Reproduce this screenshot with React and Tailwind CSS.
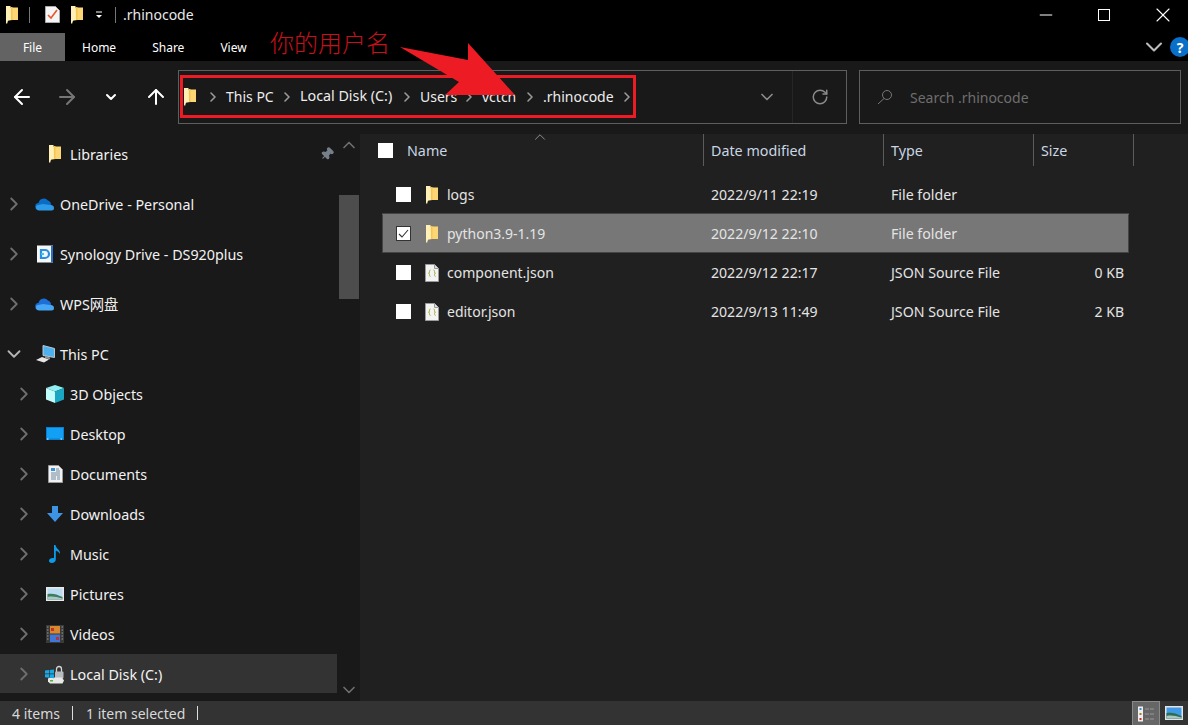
import { ChevronRight, ChevronDown, ChevronUp, ArrowLeft, ArrowRight, ArrowUp, RotateCw, X, Minus, Pin } from 'lucide-react';

const Folder = () => (
  <svg viewBox="0 0 12 18" className="w-3 h-[18px] shrink-0">
    <path d="M4 1.500h8V14H4z" fill="#fcd675" />
    <path d="M0 0h4.500L5 14l-3 .8L1 18l-1-1z" fill="#fff0b8" />
    <path d="M2 14.800L5 14V1h1.500v13z" fill="#f5c451" />
  </svg>
);

const JsonFile = () => (
  <svg viewBox="0 0 14 18" className="w-[14px] h-[18px]">
    <path d="M.5.5h9l4 4v13H.5z" fill="#f3f3f3" stroke="#9a9a9a" />
    <path d="M9.5.5v4h4" fill="#ddd" stroke="#9a9a9a" />
    <path d="M5.500 6c-1.200 0-1 1-1 2s-.3 1-1 1.200c.7.200 1 .200 1 1.200s-.2 2 1 2M8.500 6c1.200 0 1 1 1 2s.3 1 1 1.200c-.7.200-1 .200-1 1.200s.2 2 1 2" fill="none" stroke="#a8ad3c" strokeWidth="1" />
  </svg>
);

const Cloud = ({ top, bottom }) => (
  <svg viewBox="0 0 20 14" className="w-5 h-[14px]">
    <path d="M4 13a3.500 3.500 0 0 1-.5-7A5.500 5.500 0 0 1 13 3.500 4.500 4.500 0 0 1 16 8a2.700 2.700 0 0 1 .5 5z" fill={top} />
    <path d="M4 13.500a3 3 0 0 1-2-5.300L8 7l9 1.200a2.700 2.700 0 0 1 2 2.800 2.500 2.500 0 0 1-2.500 2.500z" fill={bottom} />
  </svg>
);

const SynologyIcon = () => (
  <svg viewBox="0 0 18 18" className="w-[18px] h-[18px]">
    <rect x="1" y="0.500" width="16" height="17" fill="#f4f8fb" />
    <rect x="15" y="0.500" width="2" height="17" fill="#2b6fc4" />
    <path d="M5 5h4a4 4 0 0 1 0 8H5z" fill="none" stroke="#2a8fe0" strokeWidth="2.200" />
    <path d="M5 9h3" stroke="#37c6e8" strokeWidth="2" />
  </svg>
);

const PcIcon = () => (
  <svg viewBox="0 0 20 18" className="w-5 h-[18px]">
    <path d="M8 .5l11.500 3v9L8 10.500z" fill="#4fb0ee" stroke="#c9d2d8" strokeWidth="0.900" />
    <path d="M10 11l5 1.500v2l-5-1.500z" fill="#8b959b" />
    <path d="M1 15l6-3 7 2.500-5 3z" fill="#e6e6e6" />
  </svg>
);

const CubeIcon = () => (
  <svg viewBox="0 0 18 18" className="w-[18px] h-[18px]">
    <path d="M9 0l9 3-9 3.500L0 3z" fill="#8ff0f2" />
    <path d="M0 3l9 3.500V18L0 14.500z" fill="#c4fbfb" />
    <path d="M18 3L9 6.500V18l9-3.500z" fill="#1ba7c4" />
  </svg>
);

const DesktopIcon = () => (
  <svg viewBox="0 0 18 14" className="w-[18px] h-[14px]">
    <rect width="18" height="13" fill="#0b7fd0" />
    <rect x="1" y="1" width="16" height="10.500" fill="#12a0f5" />
    <path d="M1 12h1.500M14.500 12H16" stroke="#fff" strokeWidth="1" />
  </svg>
);

const DocsIcon = () => (
  <svg viewBox="0 0 15 18" className="w-[15px] h-[18px]">
    <path d="M.5.5h10l4 4v13H.5z" fill="#f1f1f1" stroke="#9a9a9a" />
    <path d="M3 3h4v3H3z" fill="#3a93d8" />
    <path d="M3 8h9M3 10h9M3 12h5M3 14h5M9 12h3M9 14h3M8 4h3M8 6h4" stroke="#6c8ba0" strokeWidth="1" />
  </svg>
);

const DownloadIcon = () => (
  <svg viewBox="0 0 16 16" className="w-4 h-4">
    <path d="M5 0h6v7h5l-8 9-8-9h5z" fill="#3d93e4" />
  </svg>
);

const MusicIcon = () => (
  <svg viewBox="0 0 12 18" className="w-3 h-[18px]">
    <path d="M5 0h1.500c.5 4 5 4.500 4.500 9-1-2-3-3-4.200-3.300V14.500c0 2-2 3.500-4 3.500S0 16.800 0 15.500 2 12.500 5 13z" fill="#0d9be8" />
  </svg>
);

const PicturesIcon = () => (
  <svg viewBox="0 0 18 14" className="w-[18px] h-[14px]">
    <rect width="18" height="14" fill="#e9e9e9" />
    <rect x="1.500" y="1.500" width="15" height="11" fill="#b9dcf3" />
    <path d="M1.500 7c5-1 9 0 15 3v2.500h-15z" fill="#3f7a63" />
    <path d="M1.500 10c5-1 9 0 15 1.500v1h-15z" fill="#a9c8c2" />
  </svg>
);

const VideosIcon = () => (
  <svg viewBox="0 0 18 18" className="w-[18px] h-[18px]">
    <rect width="18" height="18" fill="#3a3a3a" />
    <rect x="4" y="1" width="10" height="7.500" fill="#d8892f" />
    <rect x="4" y="9.500" width="10" height="7.500" fill="#3f77d6" />
    <path d="M5 3h3v3H5zM10 12h3v3h-3z" fill="#c62f2a" />
    <path d="M1 2h1.500M1 5h1.500M1 8h1.500M1 11h1.500M1 14h1.500M15.500 2H17M15.500 5H17M15.500 8H17M15.500 11H17M15.500 14H17" stroke="#999" strokeWidth="1" />
  </svg>
);

const DiskIcon = () => (
  <svg viewBox="0 0 20 19" className="w-5 h-[19px]">
    <path d="M11.500 7V4a2.500 2.500 0 0 1 5 0v3" fill="none" stroke="#d5d5d5" strokeWidth="1.300" />
    <rect x="10" y="6.500" width="8.500" height="7" rx="1" fill="#b7bcc0" />
    <path d="M3 13.500l2-1h12l2 3-1.500 3H5l-2-2z" fill="#e8e8e8" />
    <rect x="5" y="15" width="3" height="1.500" fill="#55b04a" />
    <path d="M0 5.500l4-.5v3.500H0zM4.700 5L9 4.400v4.100H4.700zM0 9.200h4v3.500l-4-.5zM4.700 9.200H9v4l-4.300-.5z" fill="#16a9e8" />
  </svg>
);

const Check = ({ checked }) => (
  <span className={`flex items-center justify-center w-[15px] h-[15px] bg-white ${checked ? 'border border-[#333]' : ''}`}>
    {checked && (
      <svg viewBox="0 0 13 13" className="w-[13px] h-[13px]">
        <path d="M2 7l3 3 6-7" fill="none" stroke="#333" strokeWidth="1.100" />
      </svg>
    )}
  </span>
);

const Sep = () => <ChevronRight className="w-4 h-4 ml-[6px] mr-[5px] text-[#9a9a9a] shrink-0" strokeWidth={2.400} />;

const NavRow = ({ label, icon, indent, open, active, gapTop, arrow = true, pin }) => (
  <div className={`flex items-center h-10 shrink-0 ${gapTop ? 'mt-[10px]' : ''} ${active ? 'bg-[#333333]' : ''}`}>
    <div className={`flex items-center justify-center w-[14px] shrink-0 ${indent ? 'ml-[17px]' : 'ml-[7px]'}`}>
      {arrow && (open
        ? <ChevronDown className="w-[22px] h-[22px] shrink-0 text-[#b5b5b5]" strokeWidth={2} />
        : <ChevronRight className="w-[22px] h-[22px] shrink-0 text-[#6f6f6f]" strokeWidth={2} />)}
    </div>
    <div className="flex items-center justify-center shrink-0 w-5 ml-[14px]">{icon}</div>
    <span className="ml-[5px] pt-[2px] text-[14.3px] text-[#f2f2f2]">{label}</span>
    {pin && <Pin className="ml-auto mr-[3px] w-[14px] h-[14px] text-[#77808a] fill-[#77808a] rotate-45" />}
  </div>
);

const files = [
  { name: 'logs', date: '2022/9/11 22:19', type: 'File folder', size: '', folder: true },
  { name: 'python3.9-1.19', date: '2022/9/12 22:10', type: 'File folder', size: '', folder: true, selected: true },
  { name: 'component.json', date: '2022/9/12 22:17', type: 'JSON Source File', size: '0 KB' },
  { name: 'editor.json', date: '2022/9/13 11:49', type: 'JSON Source File', size: '2 KB' },
];

export default function App() {
  return (
    <div className="relative flex flex-col w-[1188px] h-[725px] overflow-hidden bg-[#191919] text-[14px] text-white font-['Noto_Sans','Noto_Sans_CJK_SC',sans-serif]">
      {/* title bar */}
      <div className="flex items-center h-[33px] shrink-0 pb-[4px] bg-black">
        <div className="ml-[6px]"><Folder /></div>
        <div className="ml-[11px] w-px h-4 bg-[#777]" />
        <svg viewBox="0 0 15 17" className="ml-[15px] w-[15px] h-[17px]">
          <path d="M.5.5h10l4 4v12H.5z" fill="#f5f5f5" stroke="#aaa" />
          <path d="M3 9l3 3 6-8" fill="none" stroke="#e8562a" strokeWidth="1.600" />
        </svg>
        <div className="ml-[11px]"><Folder /></div>
        <svg viewBox="0 0 8 8" className="ml-[12px] w-2 h-2">
          <path d="M1 1h6" stroke="#fff" />
          <path d="M1 4h6L4 7z" fill="#fff" />
        </svg>
        <div className="ml-[12px] w-px h-4 bg-[#777]" />
        <span className="ml-[7px] text-[#e8e8e8]">.rhinocode</span>
        <div className="ml-auto flex items-center">
          <Minus className="w-5 h-5 mr-[42px]" strokeWidth={1.200} />
          <span className="w-3 h-3 mr-[41px] border border-white" />
          <X className="w-6 h-6 mr-[13px]" strokeWidth={1.100} />
        </div>
      </div>
      {/* ribbon tabs */}
      <div className="flex items-center h-[28px] shrink-0 bg-black text-[12px]">
        <div className="flex items-center justify-center w-[65px] h-full pt-[2px] bg-[#636363]">File</div>
        <span className="ml-[17px] pt-[2px]">Home</span>
        <span className="ml-[36px] pt-[2px]">Share</span>
        <span className="ml-[36px] pt-[2px]">View</span>
        <ChevronDown className="ml-auto mr-[2px] w-7 h-7 text-[#bbb]" strokeWidth={1.800} />
        <span className="flex items-center justify-center w-5 h-5 -mr-[2px] rounded-full bg-[#0a6fc9] text-[14px] font-bold">?</span>
      </div>
      {/* address row */}
      <div className="flex items-start h-[73px] pt-[9px] shrink-0 bg-[#191919]">
        <div className="flex items-center h-[54px]">
          <ArrowLeft className="ml-[10px] w-6 h-6" strokeWidth={2} />
          <ArrowRight className="ml-[21px] w-6 h-6 text-[#767676]" strokeWidth={2} />
          <ChevronDown className="ml-[24px] w-4 h-4" strokeWidth={3} />
          <ArrowUp className="ml-[25px] w-6 h-6" strokeWidth={2} />
        </div>
        <div className="ml-[10px] flex items-center w-[669px] h-[54px] border border-[#5e5e5e] text-[#ededed]">
          <div className="ml-[5px]"><Folder /></div>
          <div className="flex items-center ml-[3px] whitespace-nowrap">
            <Sep />
            <span className="w-[47px] pb-[2px]">This PC</span>
            <Sep />
            <span className="w-[93px] pb-[2px] text-[14.3px]">Local Disk (C:)</span>
            <Sep />
            <span className="w-[35px] pb-[2px]">Users</span>
            <Sep />
            <span className="w-[34px] pb-[2px]">vctcn</span>
            <Sep />
            <span className="w-[70px] pb-[2px]">.rhinocode</span>
            <Sep />
          </div>
          <ChevronDown className="ml-auto mr-[15px] w-5 h-5 text-[#8a8a8a]" strokeWidth={2} />
          <div className="flex items-center justify-center w-[54px] h-full border-l border-[#262626]">
            <RotateCw className="w-[18px] h-[18px] text-[#8a8a8a]" strokeWidth={2} />
          </div>
        </div>
        <div className="ml-[12px] flex items-center w-[322px] h-[54px] border border-[#5e5e5e] text-[#6e6e6e]">
          <svg viewBox="0 0 16 16" className="ml-[17px] w-4 h-4">
            <circle cx="10" cy="6" r="4.500" fill="none" stroke="#777" strokeWidth="1" />
            <path d="M7 9.500L1 15" stroke="#777" strokeWidth="1" />
          </svg>
          <span className="ml-[17px]">Search .rhinocode</span>
        </div>
      </div>
      {/* body */}
      <div className="flex flex-1 min-h-0">
        <div className="flex w-[360px] shrink-0 bg-[#191919]">
          <div className="flex flex-col w-[337px] h-[559px] overflow-hidden">
            <NavRow label="Libraries" indent arrow={false} pin icon={<Folder />} />
            <NavRow label="OneDrive - Personal" gapTop icon={<Cloud top="#0a6cc4" bottom="#2d9be8" />} />
            <NavRow label="Synology Drive - DS920plus" gapTop icon={<SynologyIcon />} />
            <NavRow label="WPS网盘" gapTop icon={<Cloud top="#1b6fd6" bottom="#47a6f5" />} />
            <NavRow label="This PC" gapTop open icon={<PcIcon />} />
            <NavRow label="3D Objects" indent icon={<CubeIcon />} />
            <NavRow label="Desktop" indent icon={<DesktopIcon />} />
            <NavRow label="Documents" indent icon={<DocsIcon />} />
            <NavRow label="Downloads" indent icon={<DownloadIcon />} />
            <NavRow label="Music" indent icon={<MusicIcon />} />
            <NavRow label="Pictures" indent icon={<PicturesIcon />} />
            <NavRow label="Videos" indent icon={<VideosIcon />} />
            <NavRow label="Local Disk (C:)" indent active icon={<DiskIcon />} />
          </div>
          <div className="flex flex-col items-center w-[20px] ml-[2px] h-[566px] text-[#6e6e6e]">
            <ChevronUp className="mt-px w-5 h-5 shrink-0" strokeWidth={2} />
            <div className="mt-[40px] w-full h-[104px] bg-[#4d4d4d]" />
            <ChevronDown className="mt-auto w-5 h-5 shrink-0" strokeWidth={2} />
          </div>
        </div>
        <div className="flex-1 bg-[#202020] text-[#e4e4e4]">
          <div className="relative flex items-center h-[33px] text-[14.3px] text-[#c9d6e4]">
            <div className="ml-[18px]"><Check /></div>
            <span className="ml-[14px]">Name</span>
            <ChevronUp className="absolute left-[171px] -top-[6px] w-[18px] h-[18px] text-[#9a9a9a]" strokeWidth={1.200} />
            <span className="absolute left-[343px] top-0 w-px h-[32px] bg-[#5c5c5c]" />
            <span className="absolute left-[351px]">Date modified</span>
            <span className="absolute left-[523px] top-0 w-px h-[32px] bg-[#5c5c5c]" />
            <span className="absolute left-[531px]">Type</span>
            <span className="absolute left-[673px] top-0 w-px h-[32px] bg-[#5c5c5c]" />
            <span className="absolute left-[681px]">Size</span>
            <span className="absolute left-[773px] top-0 w-px h-[32px] bg-[#5c5c5c]" />
          </div>
          <div className="flex flex-col mt-[8px] ml-[22px] w-[747px]">
            {files.map((file) => (
              <div key={file.name} className={`flex items-center h-[39px] border ${file.selected ? 'bg-[#777777] border-x-[#444444] border-b-[#444444] border-t-[#777777] shadow-[0_-1px_0_#444444]' : 'border-transparent'}`}>
                <div className="ml-[13px] w-[15px]"><Check checked={file.selected} /></div>
                <div className="ml-[14px] w-[14px] flex justify-center">{file.folder ? <Folder /> : <JsonFile />}</div>
                <span className="ml-[8px] w-[264px]">{file.name}</span>
                <span className="w-[180px] text-[14.1px]">{file.date}</span>
                <span className="w-[150px] text-[14.2px]">{file.type}</span>
                <span className="flex-1 text-right pr-[4px]">{file.size}</span>
              </div>
            ))}
          </div>
        </div>
      </div>
      {/* status bar */}
      <div className="flex items-center h-[24px] shrink-0 bg-[#333333] text-[#d8d8d8]">
        <span className="ml-[12px]">4 items</span>
        <span className="ml-[12px] w-px h-[14px] bg-[#ddd]" />
        <span className="ml-[13px]">1 item selected</span>
        <span className="ml-[12px] w-px h-[14px] bg-[#ddd]" />
        <div className="ml-auto flex items-center justify-center w-[28px] h-full bg-[#666666] border-x border-t border-[#8a8a8a]">
          <svg viewBox="0 0 18 16" className="w-[18px] h-4">
            <rect x="1" y="0.500" width="5" height="15" fill="#eee" />
            <path d="M2.500 2h2v2h-2z" fill="#3a8fc0" />
            <path d="M2.500 7h2v2h-2z" fill="#a8752c" />
            <path d="M2.500 12h2v2h-2z" fill="#c62f2a" />
            <path d="M8 3h4M13 3h4M8 8h4M13 8h4M8 13h4M13 13h4" stroke="#999" />
          </svg>
        </div>
        <svg viewBox="0 0 18 14" className="ml-[5px] mr-[5px] w-[18px] h-[14px]">
          <rect width="18" height="14" fill="#e4e4e4" />
          <rect x="1.500" y="1.500" width="15" height="11" fill="#3f9ae8" />
          <path d="M1.500 7c5-1 9 0 15 3v2.500h-15z" fill="#2f6d50" />
          <path d="M1.500 10c5-1 9 0 15 1.500v1h-15z" fill="#a9c8c2" />
        </svg>
      </div>
      {/* annotation */}
      <span className="absolute left-[270px] top-[27px] text-[24px] font-light leading-[30px] text-[#c8101a] font-['Noto_Sans_CJK_SC',serif]">你的用户名</span>
      <div className="absolute left-[180px] top-[75px] w-[456px] h-[43px] border-[3px] border-[#ed1c24]" />
      <svg viewBox="0 0 1188 725" className="absolute inset-0 w-[1188px] h-[725px] pointer-events-none">
        <path d="M400 47L468 60V43L515 95L445 95L459 82Z" fill="#ed1c24" />
      </svg>
    </div>
  );
}
